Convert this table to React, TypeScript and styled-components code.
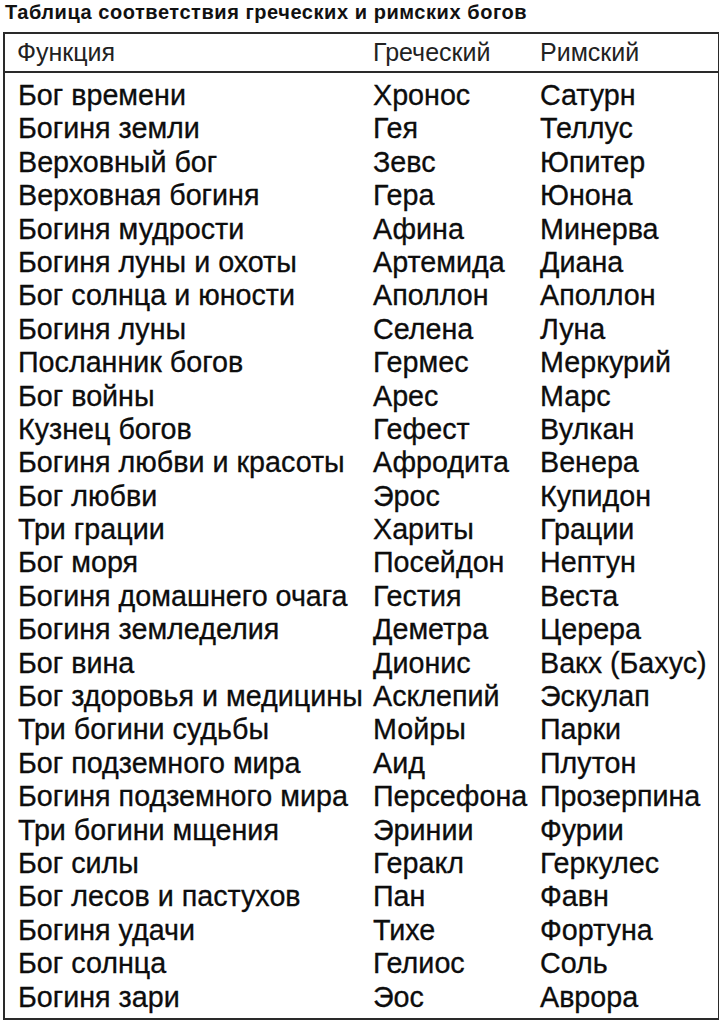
import styled, {createGlobalStyle} from "styled-components";

const GlobalStyle = createGlobalStyle`
  html, body {
    margin: 0;
    padding: 0;
    background: #fff;
  }
  body {
    font-family: "Liberation Sans", Arial, sans-serif;
    color: #111;
  }
`;

const Page = styled.div`
  width: 726px;
  height: 1024px;
  overflow: hidden;
  background: #fff;
`;

const Title = styled.h1`
  margin: 0;
  padding: 1px 0 0 5px;
  height: 32px;
  box-sizing: border-box;
  font-size: 20px;
  font-weight: 700;
  line-height: 22px;
  letter-spacing: 0.55px;
  color: #111;
`;

const Frame = styled.div`
  margin-left: 3px;
  width: 716px;
  box-sizing: border-box;
  border: 2px solid #2a2a2a;
  border-right-width: 1.5px;
`;

const HeadRow = styled.div`
  display: grid;
  grid-template-columns: 356px 167px 1fr;
  padding-left: 12px;
  height: 37px;
  align-items: center;
  border-bottom: 2px solid #2a2a2a;
`;

const HeadCell = styled.div`
  font-size: 25px;
  color: #222;
  line-height: 37px;
`;

const Body = styled.div`
  padding: 6px 0 4px 13px;
`;

const Row = styled.div`
  display: grid;
  grid-template-columns: 355px 167px 1fr;
  height: 33.4px;
  align-items: center;
`;

const Cell = styled.div`
  font-size: 28.7px;
  line-height: 33.4px;
  white-space: nowrap;
  color: #0d0d0d;
  -webkit-text-stroke: 0.3px #0d0d0d;
`;

const rows: [string, string, string][] = [
  ["Бог времени", "Хронос", "Сатурн"],
  ["Богиня земли", "Гея", "Теллус"],
  ["Верховный бог", "Зевс", "Юпитер"],
  ["Верховная богиня", "Гера", "Юнона"],
  ["Богиня мудрости", "Афина", "Минерва"],
  ["Богиня луны и охоты", "Артемида", "Диана"],
  ["Бог солнца и юности", "Аполлон", "Аполлон"],
  ["Богиня луны", "Селена", "Луна"],
  ["Посланник богов", "Гермес", "Меркурий"],
  ["Бог войны", "Арес", "Марс"],
  ["Кузнец богов", "Гефест", "Вулкан"],
  ["Богиня любви и красоты", "Афродита", "Венера"],
  ["Бог любви", "Эрос", "Купидон"],
  ["Три грации", "Хариты", "Грации"],
  ["Бог моря", "Посейдон", "Нептун"],
  ["Богиня домашнего очага", "Гестия", "Веста"],
  ["Богиня земледелия", "Деметра", "Церера"],
  ["Бог вина", "Дионис", "Вакх (Бахус)"],
  ["Бог здоровья и медицины", "Асклепий", "Эскулап"],
  ["Три богини судьбы", "Мойры", "Парки"],
  ["Бог подземного мира", "Аид", "Плутон"],
  ["Богиня подземного мира", "Персефона", "Прозерпина"],
  ["Три богини мщения", "Эринии", "Фурии"],
  ["Бог силы", "Геракл", "Геркулес"],
  ["Бог лесов и пастухов", "Пан", "Фавн"],
  ["Богиня удачи", "Тихе", "Фортуна"],
  ["Бог солнца", "Гелиос", "Соль"],
  ["Богиня зари", "Эос", "Аврора"],
];

export default function App() {
  return (
    <Page>
      <GlobalStyle />
      <Title>Таблица соответствия греческих и римских богов</Title>
      <Frame>
        <HeadRow>
          <HeadCell>Функция</HeadCell>
          <HeadCell>Греческий</HeadCell>
          <HeadCell>Римский</HeadCell>
        </HeadRow>
        <Body>
          {rows.map(([fn, greek, roman]) => (
            <Row key={fn}>
              <Cell>{fn}</Cell>
              <Cell>{greek}</Cell>
              <Cell>{roman}</Cell>
            </Row>
          ))}
        </Body>
      </Frame>
    </Page>
  );
}
